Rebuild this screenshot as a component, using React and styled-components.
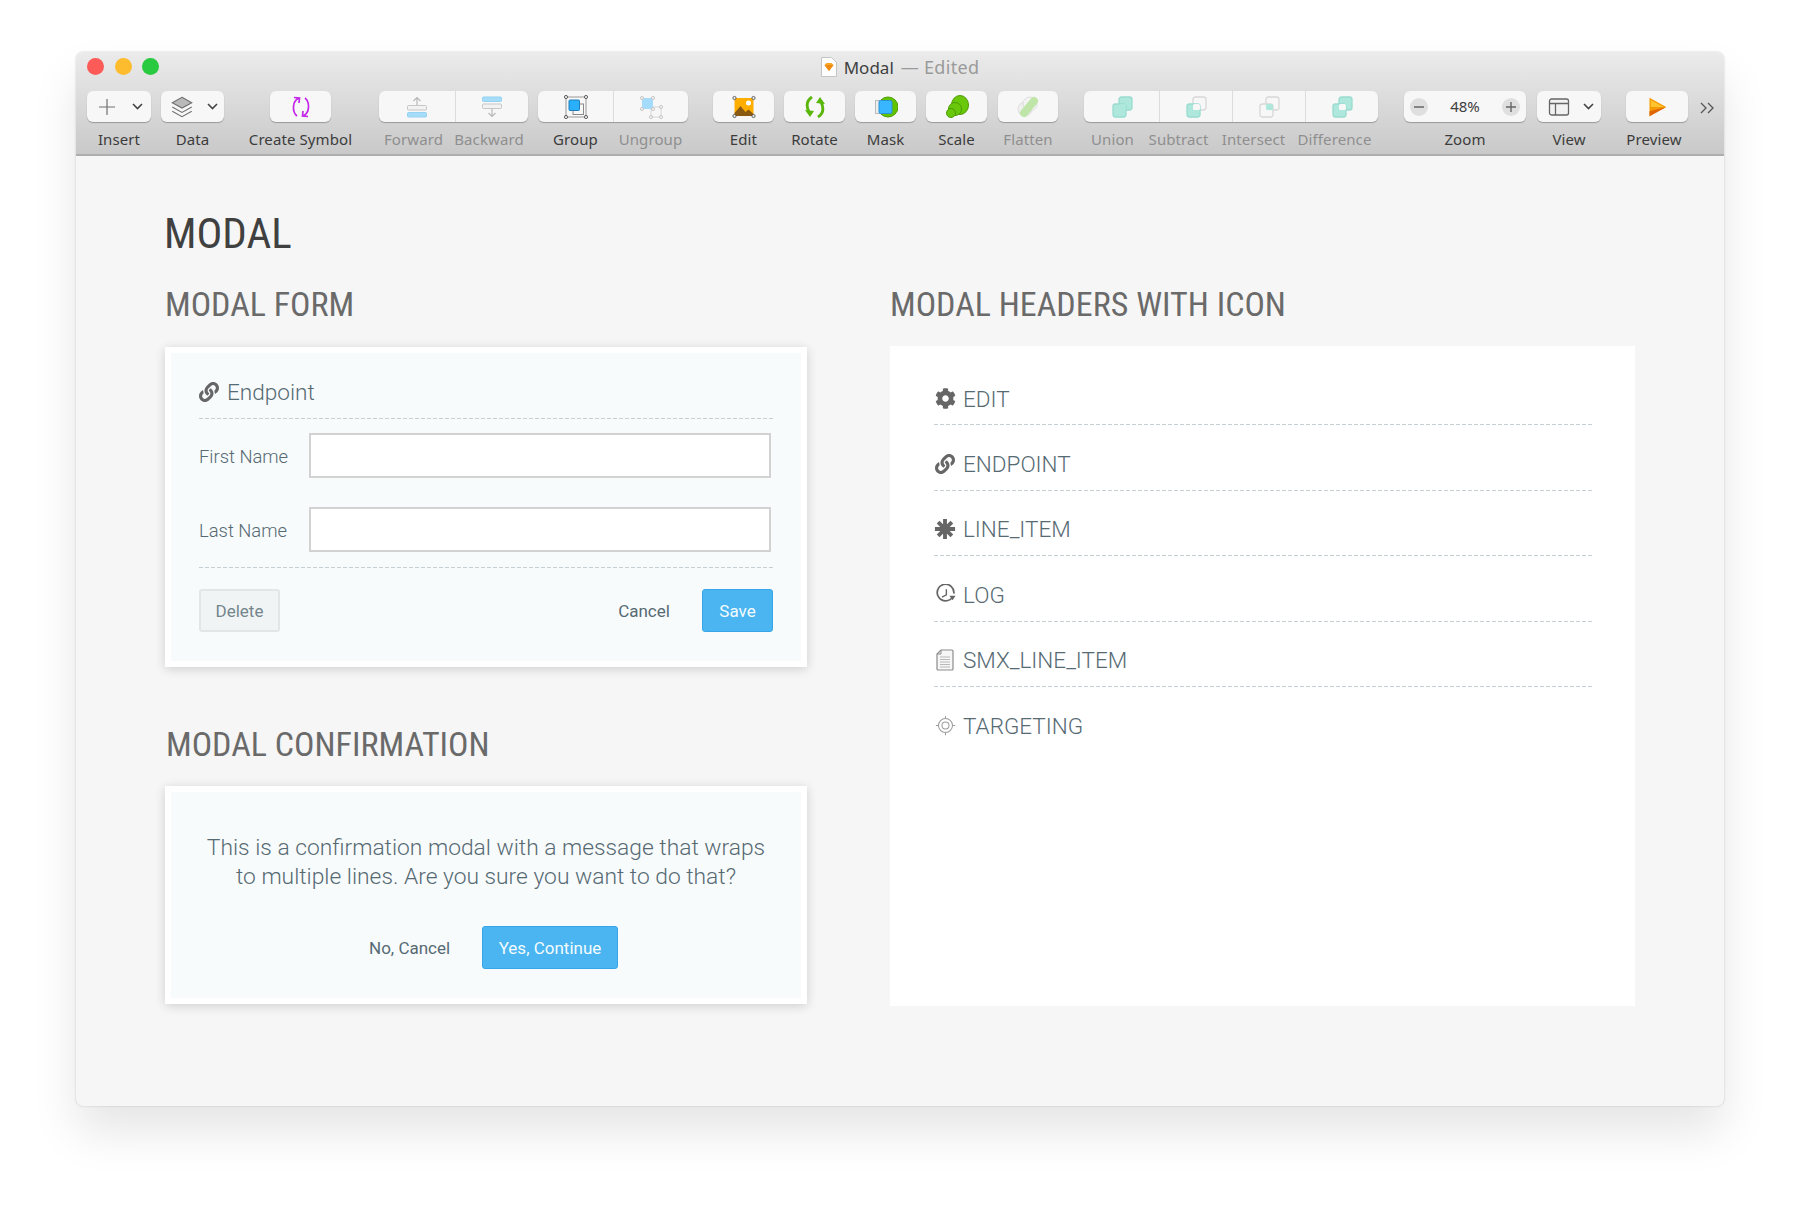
import React from "react";
import styled, { createGlobalStyle, css } from "styled-components";
import { FaCog, FaLink } from "react-icons/fa";

const GlobalStyle = createGlobalStyle`
  html, body {
    margin: 0;
    background: #fff;
    font-family: Roboto, "Liberation Sans", sans-serif;
  }
  * { box-sizing: border-box; }
`;

const dashed = css`
  background-image: repeating-linear-gradient(90deg, #c6d0d4 0 4px, transparent 4px 6px);
  background-size: 100% 1px;
  background-repeat: no-repeat;
`;

const Page = styled.div`
  width: 1800px;
  height: 1208px;
  padding: 52px 0 0 76px;
  overflow: hidden;
`;

const Win = styled.div`
  width: 1648px;
  height: 1054px;
  border-radius: 7px;
  overflow: hidden;
  background: #f6f6f6;
  box-shadow: 0 26px 46px rgba(0, 0, 0, 0.1), 0 0 2px rgba(0, 0, 0, 0.22);
`;

const TopBar = styled.header`
  height: 104px;
  background: linear-gradient(#ebebeb, #c9c9c9);
  border-bottom: 2px solid #aeaeae;
  display: flex;
  flex-direction: column;
  font-family: "Noto Sans", Inter, sans-serif;
`;

const TitleRow = styled.div`
  height: 39px;
  padding-bottom: 9px;
  display: flex;
  align-items: center;
  position: relative;
  justify-content: center;
  font-size: 17px;
  color: #404040;
  gap: 7px;
`;

const Lights = styled.div`
  position: absolute;
  left: 11px;
  top: 6px;
  display: flex;
  gap: 10.5px;
`;

const Light = styled.span`
  width: 17px;
  height: 17px;
  border-radius: 50%;
  background: ${(p) => p.$color};
`;

const Faded = styled.span`
  color: #9a9a9a;
  font-size: 18px;
  letter-spacing: 0.3px;
`;

const Tools = styled.div`
  display: flex;
  padding-left: 11px;
`;

const Tool = styled.div`
  margin-left: ${(p) => p.$gap || 0}px;
  display: flex;
  flex-direction: column;
  align-items: center;
`;

const Group = styled.div`
  display: flex;
  height: 31px;
  background: #f7f7f7;
  border-radius: 6px;
  box-shadow: 0 1px 1px rgba(0, 0, 0, 0.28);
`;

const Seg = styled.div`
  width: ${(p) => p.$w}px;
  display: flex;
  align-items: center;
  justify-content: center;
  gap: ${(p) => p.$between || 0}px;
  padding-left: ${(p) => p.$pad || 0}px;
  border-left: ${(p) => (p.$divided ? "1px solid #dcdcdc" : "none")};
`;

const Labels = styled.div`
  display: flex;
  margin-top: 8px;
`;

const Label = styled.div`
  width: ${(p) => p.$w}px;
  display: flex;
  justify-content: center;
  padding-right: ${(p) => p.$nudge || 0}px;
  font-size: 15px;
  line-height: 18px;
  white-space: nowrap;
  color: ${(p) => (p.$off ? "#8f8f8f" : "#3c3c3c")};
  letter-spacing: 0.1px;
`;

const ZoomBox = styled.div`
  width: 122px;
  padding: 0 6px;
  display: flex;
  align-items: center;
  justify-content: space-between;
  font-size: 15px;
  color: #404040;
`;

const ZoomValue = styled.span`
  padding-bottom: 2px;
`;

const ZoomBtn = styled.span`
  width: 18px;
  height: 18px;
  border-radius: 50%;
  background: #dfdfdf;
  display: flex;
  align-items: center;
  justify-content: center;
`;

const More = styled.div`
  margin: 7px 0 0 11px;
  height: 14px;
`;

const Content = styled.main`
  display: grid;
  grid-template-columns: 642px 745px;
  column-gap: 83px;
  padding: 53px 0 0 89px;
`;

const Title = styled.h1`
  grid-column: 1 / 3;
  margin: 0 0 0 -1px;
  font-size: 43px;
  line-height: 48px;
  font-weight: 400;
  font-stretch: 75%;
  color: #404040;
`;

const Col = styled.section`
  display: flex;
  flex-direction: column;
`;

const SubTitle = styled.h2`
  margin: ${(p) => p.$top || 0}px 0 0 ${(p) => p.$left || 0}px;
  font-size: 34px;
  line-height: 40px;
  font-weight: 400;
  font-stretch: 75%;
  color: #6a6a6a;
`;

const Card = styled.div`
  margin-top: ${(p) => p.$top}px;
  height: ${(p) => p.$h}px;
  background: #f8fbfc;
  border: 6px solid #fff;
  box-shadow: 0 2px 10px rgba(0, 0, 0, 0.16);
  padding: 0 28px;
  display: flex;
  flex-direction: column;
`;

const FormHead = styled.div`
  height: 66px;
  display: flex;
  align-items: center;
  gap: 8px;
  font-size: 22.6px;
  font-weight: 300;
  color: #566a73;
  padding-top: 12px;
  ${dashed}
  background-position: bottom;
`;

const Field = styled.div`
  display: flex;
  align-items: center;
  margin-top: ${(p) => p.$top}px;
  font-size: 18.4px;
  font-weight: 300;
  color: #566a73;
`;

const FieldName = styled.label`
  width: 110px;
  padding-top: 2px;
`;

const Input = styled.div`
  width: 462px;
  height: 45px;
  background: #fff;
  border: 2px solid #d2d2d2;
`;

const FormFoot = styled.div`
  margin-top: 15px;
  padding-top: 22px;
  display: flex;
  align-items: center;
  ${dashed}
  background-position: top;
`;

const Btn = styled.button`
  height: 43px;
  width: ${(p) => p.$w}px;
  margin-left: ${(p) => (p.$auto ? "auto" : `${p.$left || 0}px`)};
  border-radius: 3px;
  font-family: Roboto, sans-serif;
  font-size: 17px;
  font-weight: 400;
  padding: 0;
  white-space: nowrap;
  border: ${(p) =>
    p.$kind === "primary" ? "1px solid #36a6e8" : p.$kind === "muted" ? "2px solid #e2e6e8" : "none"};
  background: ${(p) =>
    p.$kind === "primary" ? "#4ab5f0" : p.$kind === "muted" ? "#f1f4f5" : "transparent"};
  color: ${(p) => (p.$kind === "primary" ? "#f4fbff" : p.$kind === "muted" ? "#74858c" : "#566a73")};
`;

const Confirm = styled.p`
  margin: 42px 0 0;
  text-align: center;
  font-size: 22.8px;
  line-height: 28.5px;
  font-weight: 300;
  color: #566a73;
`;

const ConfirmBtns = styled.div`
  display: flex;
  margin-top: 35px;
  padding-left: 170px;
`;

const HeaderPanel = styled.div`
  margin-top: 22px;
  height: 660px;
  background: #fff;
  padding: 14px 41px 0 44px;
`;

const Row = styled.div`
  height: 65.4px;
  padding-top: 12px;
  display: flex;
  align-items: center;
  gap: 7px;
  font-size: 22.5px;
  font-weight: 300;
  color: #566a73;
  ${(p) => !p.$last && dashed}
  background-position: bottom;
`;

const RowIcon = styled.span`
  width: 22px;
  height: 22px;
  display: flex;
  align-items: center;
  justify-content: center;
  color: #666;
`;

const Svg = ({ children, w = 24, h = 24, vw = 24, vh = 24 }) => (
  <svg width={w} height={h} viewBox={`0 0 ${vw} ${vh}`}>
    {children}
  </svg>
);

const Chevron = () => (
  <svg width="11" height="7" viewBox="0 0 11 7">
    <path d="M1 1l4.5 4.5L10 1" fill="none" stroke="#444" strokeWidth="1.6" />
  </svg>
);

const Handles = ({ pts, stroke = "#555", fill = "#eee" }) =>
  pts.map(([x, y]) => <circle key={`${x}-${y}`} cx={x} cy={y} r="1.6" fill={fill} stroke={stroke} strokeWidth="0.9" />);

const PlusIcon = () => (
  <Svg w={16} h={16} vw={16} vh={16}>
    <path d="M8 0v16M0 8h16" stroke="#707070" strokeWidth="1.2" />
  </Svg>
);

const LayersIcon = () => (
  <Svg w={26} h={26}>
    <path d="M12 3l9 5-9 5-9-5z" fill="#b9b9b9" stroke="#707070" />
    <path d="M3 12l9 5 9-5M3 16l9 5 9-5" fill="none" stroke="#707070" />
  </Svg>
);

const SymbolIcon = () => (
  <Svg>
    <g fill="none" stroke="#c326e8" strokeWidth="1.7">
      <path d="M10 3C3 6 3 17 8 21M5 2.5l5.5.5-.5 5" />
      <path d="M14 21c7-3 7-14 2-18M19 21.5l-5.5-.5.5-5" />
    </g>
  </Svg>
);

const ForwardIcon = () => (
  <Svg>
    <path d="M12 10V2.500M8.500 6L12 2.500 15.500 6" fill="none" stroke="#b8b8b8" strokeWidth="1.2" />
    <rect x="2.500" y="10.500" width="19" height="4.500" rx="1" fill="#f2f2f2" stroke="#c6c6c6" />
    <rect x="2.500" y="17.500" width="19" height="4.500" rx="1" fill="#a6dcf8" stroke="#93d2f3" />
  </Svg>
);

const BackwardIcon = () => (
  <Svg>
    <rect x="2.500" y="2" width="19" height="4.500" rx="1" fill="#a6dcf8" stroke="#93d2f3" />
    <rect x="2.500" y="9" width="19" height="4.500" rx="1" fill="#f2f2f2" stroke="#c6c6c6" />
    <path d="M12 14v7.500M8.500 18l3.500 3.500 3.500-3.500" fill="none" stroke="#b8b8b8" strokeWidth="1.2" />
  </Svg>
);

const GroupIcon = () => (
  <Svg>
    <rect x="2" y="2" width="20" height="20" fill="none" stroke="#9a9a9a" />
    <rect x="9" y="9" width="10.500" height="10.500" fill="none" stroke="#8a8a8a" />
    <rect x="5" y="5" width="10.500" height="10.500" rx="1" fill="#2ab0fb" stroke="#1c7fbc" />
    <Handles pts={[[2, 2], [22, 2], [2, 22], [22, 22]]} />
  </Svg>
);

const UngroupIcon = () => (
  <Svg>
    <rect x="12" y="12" width="10" height="10" fill="none" stroke="#d5d5d5" />
    <rect x="3" y="3" width="11" height="11" fill="#a5dcfb" />
    <Handles pts={[[3, 3], [14, 3], [3, 14], [14, 14], [22, 12], [22, 22], [12, 22]]} stroke="#c4c4c4" />
  </Svg>
);

const EditIcon = () => (
  <Svg>
    <rect x="2.500" y="3" width="19" height="18" fill="#ffae00" />
    <circle cx="16.500" cy="8" r="2.500" fill="#fff" />
    <path d="M2.500 21v-3l6-7 5 6 3-2.500 5 4.500v2z" fill="#8a5a12" />
    <Handles pts={[[2.5, 3], [21.5, 3], [2.5, 21], [21.5, 21]]} />
  </Svg>
);

const RotateIcon = () => (
  <Svg>
    <g fill="none" stroke="#5ab60b" strokeWidth="2.800">
      <path d="M9 2C3 6 3 11 6 17" />
      <path d="M15 22c6-4 6-9 3-15" />
    </g>
    <path d="M2 15l9 1-4 6zM22 9l-9-1 4-6z" fill="#5ab60b" />
  </Svg>
);

const MaskIcon = () => (
  <Svg>
    <circle cx="14" cy="12" r="10" fill="#62c400" stroke="#4a9c00" />
    <rect x="1.500" y="5.500" width="12" height="13" fill="#eee" stroke="#bbb" />
    <rect x="5" y="5.500" width="13" height="13" rx="1.500" fill="#38b6ff" stroke="#2a93d4" />
  </Svg>
);

const ScaleIcon = () => (
  <Svg>
    <g fill="#6ac80a" stroke="#4d9a05">
      <ellipse cx="15" cy="10" rx="8.500" ry="9.500" />
      <circle cx="10" cy="14" r="6.500" />
      <circle cx="6" cy="18" r="4.500" />
    </g>
  </Svg>
);

const FlattenIcon = () => (
  <Svg>
    <circle cx="9" cy="14" r="7" fill="#f0f0f0" stroke="#ddd" />
    <circle cx="14" cy="9" r="7" fill="#f4f4f4" stroke="#ddd" />
    <path d="M8 18L18 6" stroke="#bfe6a8" strokeWidth="8" strokeLinecap="round" />
  </Svg>
);

const TEAL = "#aee8dc";
const TEAL_LINE = "#9adccf";

// top right square, bottom left square, and what the overlap looks like
const BoolIcon = ({ top, bottom, overlap }) => (
  <Svg>
    <rect x="9" y="2" width="13" height="13" rx="2.500" fill={top ? TEAL : "#f7f7f7"} stroke={top ? TEAL_LINE : "#d8d8d8"} strokeWidth="1.300" />
    <rect x="3" y="9" width="13" height="13" rx="2.500" fill={bottom ? TEAL : "#f7f7f7"} stroke={bottom ? TEAL_LINE : "#d8d8d8"} strokeWidth="1.300" />
    {overlap && <rect x="9" y="9" width="7" height="6" rx="1.500" fill={overlap} />}
  </Svg>
);

const ViewIcon = () => (
  <Svg w={22} h={20} vw={22} vh={20}>
    <rect x="1.500" y="2" width="19" height="16" rx="2" fill="#f2f2f2" stroke="#666" strokeWidth="1.300" />
    <path d="M1.500 6.500h19M7.500 6.500V18" stroke="#666" strokeWidth="1.300" />
  </Svg>
);

const PreviewIcon = () => (
  <Svg w={20} h={20}>
    <path d="M3 1l20 11L3 23z" fill="#f59a00" />
    <path d="M4.500 3.500L20 12H4.500z" fill="#ffc42e" />
    <path d="M3 17l20-5L3 23z" fill="#e0640a" />
  </Svg>
);

const MoreIcon = () => (
  <Svg w={16} h={14} vw={16} vh={14}>
    <path d="M2 2l5 5-5 5M9 2l5 5-5 5" fill="none" stroke="#555" strokeWidth="1.300" />
  </Svg>
);

const DocIcon = () => (
  <Svg w={16} h={20} vw={16} vh={20}>
    <path d="M.5.500h10l5 5v14H.5z" fill="#fdfdfd" stroke="#c4c4c4" />
    <path d="M3.500 8l2-2h5l2 2-4.500 6z" fill="#f6a623" />
    <path d="M3.500 8h9l-4.500 6z" fill="#f08a12" />
  </Svg>
);

const AsteriskIcon = () => (
  <Svg w={22} h={22}>
    <path d="M12 1v22M1 12h22M4.500 4.500l15 15M19.500 4.500l-15 15" stroke="#666" strokeWidth="4.200" />
  </Svg>
);

const LogIcon = () => (
  <Svg w={21} h={21}>
    <path d="M20 15A9.500 9.500 0 1 1 21.500 11" fill="none" stroke="#666" strokeWidth="2" />
    <path d="M13 6v6.500l-5 2.500" fill="none" stroke="#666" strokeWidth="1.600" />
    <path d="M16.500 13.500h7L20 18.500z" fill="#666" />
  </Svg>
);

const FileIcon = () => (
  <Svg w={18} h={22} vw={18} vh={22}>
    <path d="M5 1h11a1 1 0 0 1 1 1v18a1 1 0 0 1-1 1H2a1 1 0 0 1-1-1V5z" fill="#f6f6f6" stroke="#8c8c8c" strokeWidth="1.200" />
    <path d="M5 1v4H1" fill="none" stroke="#8c8c8c" />
    <path d="M4 8h10M4 10.500h10M4 13h10M4 15.500h10M4 18h10" stroke="#b8b8b8" />
  </Svg>
);

const TargetIcon = () => (
  <Svg w={21} h={21}>
    <g fill="none" stroke="#9c9c9c" strokeWidth="1.200">
      <circle cx="12" cy="12" r="8" />
      <circle cx="12" cy="12" r="4" />
      <path d="M12 1v3M12 20v3M1 12h3M20 12h3" />
    </g>
  </Svg>
);

const tools = [
  { gap: 0, between: 17, pad: 4, segs: [{ w: 64, label: "Insert", icon: <PlusIcon />, chevron: true }] },
  { gap: 10, between: 11.5, pad: 1.5, segs: [{ w: 63, label: "Data", icon: <LayersIcon />, chevron: true }] },
  { gap: 46, segs: [{ w: 61, label: "Create Symbol", icon: <SymbolIcon /> }] },
  {
    gap: 48,
    segs: [
      { w: 76, label: "Forward", off: true, nudge: 7, icon: <ForwardIcon /> },
      { w: 73, label: "Backward", off: true, nudge: 5, icon: <BackwardIcon /> },
    ],
  },
  {
    gap: 10,
    segs: [
      { w: 75, label: "Group", icon: <GroupIcon /> },
      { w: 75, label: "Ungroup", off: true, icon: <UngroupIcon /> },
    ],
  },
  { gap: 25, segs: [{ w: 61, label: "Edit", icon: <EditIcon /> }] },
  { gap: 10, segs: [{ w: 61, label: "Rotate", icon: <RotateIcon /> }] },
  { gap: 10, segs: [{ w: 61, label: "Mask", icon: <MaskIcon /> }] },
  { gap: 10, segs: [{ w: 61, label: "Scale", icon: <ScaleIcon /> }] },
  { gap: 11, segs: [{ w: 60, label: "Flatten", off: true, icon: <FlattenIcon /> }] },
  {
    gap: 26,
    segs: [
      { w: 75, label: "Union", off: true, nudge: 18, icon: <BoolIcon top bottom overlap={TEAL} /> },
      { w: 73, label: "Subtract", off: true, nudge: 34, icon: <BoolIcon bottom overlap="#f7f7f7" /> },
      { w: 73, label: "Intersect", off: true, nudge: 30, icon: <BoolIcon overlap={TEAL} /> },
      { w: 73, label: "Difference", off: true, nudge: 14, icon: <BoolIcon top bottom overlap="#f7f7f7" /> },
    ],
  },
];

const Toolbar = () => (
  <Tools>
    {tools.map((t) => (
      <Tool key={t.segs[0].label} $gap={t.gap}>
        <Group>
          {t.segs.map((s, i) => (
            <Seg key={s.label} $w={s.w} $divided={i > 0} $between={t.between} $pad={t.pad}>
              {s.icon}
              {s.chevron && <Chevron />}
            </Seg>
          ))}
        </Group>
        <Labels>
          {t.segs.map((s) => (
            <Label key={s.label} $w={s.w} $off={s.off} $nudge={s.nudge}>
              {s.label}
            </Label>
          ))}
        </Labels>
      </Tool>
    ))}
    <Tool $gap={26}>
      <Group>
        <ZoomBox>
          <ZoomBtn>
            <Svg w={10} h={10} vw={10} vh={10}><path d="M0 5h10" stroke="#666" strokeWidth="1.4" /></Svg>
          </ZoomBtn>
          <ZoomValue>48%</ZoomValue>
          <ZoomBtn>
            <Svg w={10} h={10} vw={10} vh={10}><path d="M0 5h10M5 0v10" stroke="#666" strokeWidth="1.4" /></Svg>
          </ZoomBtn>
        </ZoomBox>
      </Group>
      <Labels><Label $w={122}>Zoom</Label></Labels>
    </Tool>
    <Tool $gap={11}>
      <Group>
        <Seg $w={64} $between={12.5} $pad={3.5}>
          <ViewIcon />
          <Chevron />
        </Seg>
      </Group>
      <Labels><Label $w={64}>View</Label></Labels>
    </Tool>
    <Tool $gap={25}>
      <Group>
        <Seg $w={62}><PreviewIcon /></Seg>
      </Group>
      <Labels><Label $w={62} $nudge={6}>Preview</Label></Labels>
    </Tool>
    <More><MoreIcon /></More>
  </Tools>
);

const rows = [
  { name: "EDIT", icon: <FaCog size={21} /> },
  { name: "ENDPOINT", icon: <FaLink size={20} /> },
  { name: "LINE_ITEM", icon: <AsteriskIcon /> },
  { name: "LOG", icon: <LogIcon /> },
  { name: "SMX_LINE_ITEM", icon: <FileIcon /> },
  { name: "TARGETING", icon: <TargetIcon /> },
];

export default function App() {
  return (
    <Page>
      <GlobalStyle />
      <Win>
        <TopBar>
          <TitleRow>
            <Lights>
              <Light $color="#fc5b57" />
              <Light $color="#fdbc2e" />
              <Light $color="#29c940" />
            </Lights>
            <DocIcon />
            Modal <Faded>— Edited</Faded>
          </TitleRow>
          <Toolbar />
        </TopBar>
        <Content>
          <Title>MODAL</Title>
          <Col>
            <SubTitle $top={27}>MODAL FORM</SubTitle>
            <Card $top={23} $h={320}>
              <FormHead><FaLink size={20} color="#666" />Endpoint</FormHead>
              <Field $top={14}><FieldName>First Name</FieldName><Input /></Field>
              <Field $top={29}><FieldName>Last Name</FieldName><Input /></Field>
              <FormFoot>
                <Btn $kind="muted" $w={81}>Delete</Btn>
                <Btn $w={80} $auto>Cancel</Btn>
                <Btn $kind="primary" $w={71} $left={18}>Save</Btn>
              </FormFoot>
            </Card>
            <SubTitle $top={57} $left={1}>MODAL CONFIRMATION</SubTitle>
            <Card $top={22} $h={218}>
              <Confirm>This is a confirmation modal with a message that wraps to multiple lines. Are you sure you want to do that?</Confirm>
              <ConfirmBtns>
                <Btn $w={81}>No, Cancel</Btn>
                <Btn $kind="primary" $w={136} $left={32}>Yes, Continue</Btn>
              </ConfirmBtns>
            </Card>
          </Col>
          <Col>
            <SubTitle $top={27}>MODAL HEADERS WITH ICON</SubTitle>
            <HeaderPanel>
              {rows.map((r, i) => (
                <Row key={r.name} $last={i === rows.length - 1}>
                  <RowIcon>{r.icon}</RowIcon>
                  {r.name}
                </Row>
              ))}
            </HeaderPanel>
          </Col>
        </Content>
      </Win>
    </Page>
  );
}
